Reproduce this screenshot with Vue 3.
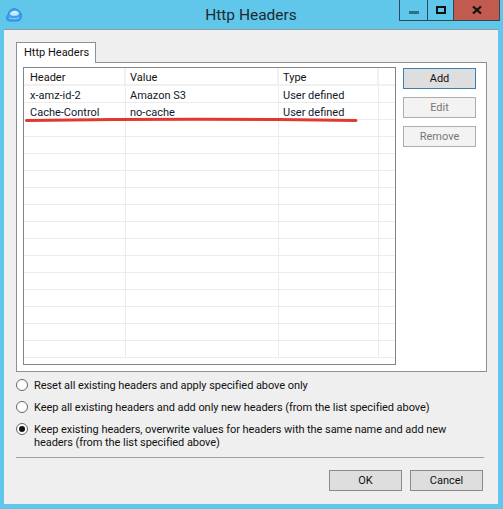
<template>
  <div class="window">
    <div class="titlebar">
      <svg class="app-icon" width="16" height="14" viewBox="0 0 16 14">
        <path d="M3.500 13C1.500 12.800.500 11.500.500 9.800c0-1.300.6-2.200 1.500-2.800C2.300 4.500 3.400 2.500 5.300 1.500 7.300.300 9.800.400 11.500 1.700c2.300 1.200 4 3.500 4 6 0 3-1.600 5.300-4 5.300z" fill="#3f9fee" stroke="#2a88dc" stroke-width="1"/>
        <path d="M4 5.500C5 3 9.500 1.800 12 3.700c1.300 1 1.200 2.800-.3 3.500-2 .9-5 .9-6.700 0C3.900 6.700 3.700 6.200 4 5.500z" fill="#bfeafc"/>
        <path d="M6 4.500c1.500-.8 3.500-.8 5 0" fill="none" stroke="#eafaff" stroke-width="1"/>
        <path d="M3 9.800c2.800 1.300 7 1.300 10 0" fill="none" stroke="#8fd6f8" stroke-width="1"/>
      </svg>
      <span class="title">Http Headers</span>
      <div class="controls">
        <div class="ctl ctl-min"><span class="min-bar"></span></div>
        <div class="ctl ctl-max"><span class="max-box"></span></div>
        <div class="ctl ctl-close">
          <svg width="10" height="8" viewBox="0 0 10 8"><path d="M1 .5l8 7M9 .5l-8 7" stroke="#111" stroke-width="2.200"/></svg>
        </div>
      </div>
    </div>

    <div class="client">
      <div class="tabs">
        <div class="tab">Http Headers</div>
      </div>
      <div class="tab-page">
        <div class="grid">
          <div class="grid-head">
            <div v-for="(c, i) in columns" :key="c" class="head-cell" :class="'col-' + i">{{ c }}</div>
            <div class="col-3"></div>
          </div>
          <div v-for="n in 16" :key="n" class="grid-row">
            <div class="cell col-0">{{ rows[n - 1] ? rows[n - 1][0] : '' }}</div>
            <div class="cell col-1">{{ rows[n - 1] ? rows[n - 1][1] : '' }}</div>
            <div class="cell col-2">{{ rows[n - 1] ? rows[n - 1][2] : '' }}</div>
            <div class="cell col-3"></div>
          </div>
          <!-- hand drawn underline, it bows a little in the middle -->
          <svg class="red-line" width="340" height="8" viewBox="0 0 340 8">
            <path d="M2.500 4.500C100 3 220 2.500 332 4.500" fill="none" stroke="#e2382f" stroke-width="3" stroke-linecap="round"/>
          </svg>
        </div>
        <div class="side-buttons">
          <button class="btn btn-default">Add</button>
          <button class="btn btn-off">Edit</button>
          <button class="btn btn-off">Remove</button>
        </div>
      </div>

      <div class="options">
        <div v-for="(o, i) in options" :key="i" class="option">
          <span class="radio" :class="{ checked: i === 2 }"></span>
          <span class="option-text">{{ o }}</span>
        </div>
      </div>

      <div class="sep"></div>

      <div class="footer">
        <button class="btn btn-foot">OK</button>
        <button class="btn btn-foot">Cancel</button>
      </div>
    </div>
  </div>
</template>

<script setup>
const columns = ['Header', 'Value', 'Type']

const rows = [
  ['x-amz-id-2', 'Amazon S3', 'User defined'],
  ['Cache-Control', 'no-cache', 'User defined']
]

const options = [
  'Reset all existing headers and apply specified above only',
  'Keep all existing headers and add only new headers (from the list specified above)',
  'Keep existing headers, overwrite values for headers with the same name and add new headers (from the list specified above)'
]
</script>

<style scoped>
.window {
  width: 503px;
  height: 509px;
  box-sizing: border-box;
  background: #61c7ea;
  padding: 0 5px 5px 4px;
  display: flex;
  flex-direction: column;
  font-family: Roboto, "Noto Sans", sans-serif;
  font-size: 11px;
  color: #111;
  overflow: hidden;
}

.titlebar {
  height: 29px;
  flex: none;
  position: relative;
  display: flex;
  align-items: flex-start;
}
.app-icon {
  margin: 8px 0 0 2px;
}
.title {
  position: absolute;
  left: 0;
  right: 0;
  top: 6px;
  text-align: center;
  font-size: 15.500px;
  color: #1c2a33;
}
.controls {
  margin-left: auto;
  margin-right: -2px;
  display: flex;
  height: 21px;
  box-sizing: border-box;
  border: 1px solid #2e4a58;
  border-top: 0;
  position: relative;
}
.ctl {
  box-sizing: border-box;
  display: flex;
  align-items: center;
  justify-content: center;
}
.ctl-min {
  width: 28px;
  border-right: 1px solid #2e4a58;
}
.ctl-max {
  width: 26px;
  border-right: 1px solid #2e4a58;
}
.ctl-close {
  width: 45px;
  background: #c15b50;
}
.min-bar {
  width: 10px;
  height: 3px;
  margin-top: 5px;
  background: #2f6f88;
}
.max-box {
  width: 6px;
  height: 4px;
  border: 2px solid #111;
}

.client {
  flex: 1;
  border-top: 1px solid #8e9aa3;
  background: #efefef;
  padding: 12px 11px 0 12px;
  display: flex;
  flex-direction: column;
  min-height: 0;
}

.tabs {
  display: flex;
  height: 21px;
  flex: none;
  position: relative;
  z-index: 1;
}
.tab {
  width: 80px;
  box-sizing: border-box;
  height: 21px;
  background: #fff;
  border: 1px solid #8c9195;
  border-bottom: 0;
  padding: 2px 0 0 7px;
  line-height: 16px;
  white-space: nowrap;
}

.tab-page {
  height: 310px;
  flex: none;
  margin-top: -1px;
  box-sizing: border-box;
  background: #fff;
  border: 1px solid #8c9195;
  padding: 4px 9px 6px 6px;
  display: flex;
  gap: 7px;
}

.grid {
  position: relative;
  width: 373px;
  box-sizing: border-box;
  border: 1px solid #7f878c;
  overflow: hidden;
  flex: none;
}
.grid-head {
  display: flex;
  height: 18px;
  box-sizing: border-box;
  border-bottom: 2px solid #f0f0f0;
}
.grid-row {
  display: flex;
  height: 17px;
  box-sizing: border-box;
  border-bottom: 1px solid #ececec;
}
.col-0 { width: 102px; flex: none; }
.col-1 { width: 153px; flex: none; }
.col-2 { width: 100px; flex: none; }
.col-3 { flex: 1; }
.head-cell {
  box-sizing: border-box;
  padding-left: 4px;
  line-height: 20px;
  border-right: 2px solid #f0f0f0;
}
.cell {
  box-sizing: border-box;
  padding-left: 4px;
  line-height: 20px;
  border-right: 1px solid #ececec;
  color: #10182a;
}
.cell.col-0,
.head-cell.col-0 {
  padding-left: 6px;
}
.cell.col-3 {
  border-right: 0;
}
.red-line {
  position: absolute;
  left: 0;
  top: 48px;
}

.side-buttons {
  display: flex;
  flex-direction: column;
  gap: 8px;
  padding-top: 1px;
}
.btn {
  font: inherit;
  color: #111;
  width: 73px;
  height: 21px;
  padding: 0 0 0 0;
  box-sizing: border-box;
  background: #dedede;
  border: 1px solid #8a8a8a;
}
.btn-default {
  border-color: #3c7fb1;
}
.btn-off {
  background: #f3f3f3;
  border-color: #adadad;
  color: #777;
}

.options {
  flex: none;
  padding-top: 7px;
  display: flex;
  flex-direction: column;
  gap: 9px;
}
.option {
  display: flex;
  gap: 6px;
  line-height: 13px;
}
.radio {
  flex: none;
  width: 12px;
  height: 12px;
  box-sizing: border-box;
  border: 1px solid #666;
  border-radius: 50%;
  background: #fff;
  display: flex;
  align-items: center;
  justify-content: center;
}
.radio.checked::after {
  content: "";
  width: 6px;
  height: 6px;
  border-radius: 50%;
  background: #111;
}
.option-text {
  width: 430px;
  letter-spacing: -0.06px;
}

.sep {
  flex: none;
  height: 1px;
  background: #a0a0a0;
  margin: 8px 3px 0 0;
}
.footer {
  flex: none;
  display: flex;
  justify-content: flex-end;
  gap: 8px;
  padding: 12px 4px 0 0;
}
</style>
